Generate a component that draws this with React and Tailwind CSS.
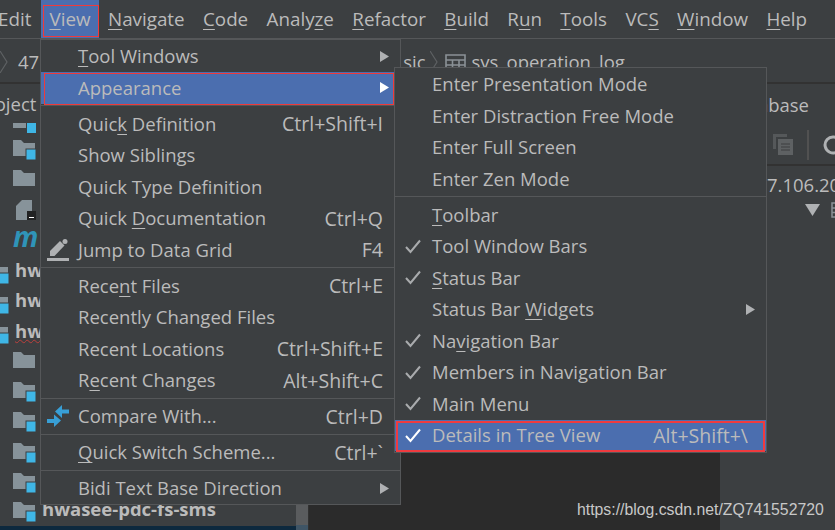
const FONT = "font-['Open_Sans','Noto_Sans',sans-serif]";

const topMenus = [
  ['Navigate', 'N'],
  ['Code', 'C'],
  ['Analyze', 'z'],
  ['Refactor', 'R'],
  ['Build', 'B'],
  ['Run', 'u'],
  ['Tools', 'T'],
  ['VCS', 'S'],
  ['Window', 'W'],
  ['Help', 'H'],
];

function Mnemonic({ text, mark }) {
  if (!mark) return <span>{text}</span>;
  const i = text.indexOf(mark);
  return (
    <span>
      {text.slice(0, i)}
      <span className="underline underline-offset-[3px] decoration-[1px]">{mark}</span>
      {text.slice(i + mark.length)}
    </span>
  );
}

function Arrow({ white }) {
  return (
    <svg width="9" height="11" viewBox="0 0 9 11" className="shrink-0">
      <path d="M0 0 L9 5.5 L0 11 Z" fill={white ? '#ffffff' : '#afb1b3'} />
    </svg>
  );
}

function Check({ white }) {
  return (
    <svg width="16" height="15" viewBox="0 0 16 15" fill="none" stroke={white ? '#ffffff' : '#a9abad'} strokeWidth="2">
      <path d="M1 8 L5.5 13 L15 1.5" />
    </svg>
  );
}

function Row({ label, mark, shortcut, arrow, icon, iconLeft = 'left-[6px]', active, pr = 'pr-[17px]' }) {
  return (
    <div className={`relative flex items-center justify-between h-[31.5px] pl-[37px] ${arrow ? 'pr-[11px]' : pr} ${active ? 'bg-[#4b6eaf]' : ''}`}>
      {icon && <div className={`absolute ${iconLeft} top-0 bottom-0 flex items-center`}>{icon}</div>}
      <Mnemonic text={label} mark={mark} />
      {shortcut && <span className="text-[19.5px]">{shortcut}</span>}
      {arrow && <Arrow white={active} />}
    </div>
  );
}

function Sep() {
  return <div className="h-[4.5px] flex items-center"><div className="h-px w-full bg-[#555759]" /></div>;
}

function Folder({ badge }) {
  return (
    <svg width="23" height="23" viewBox="0 0 23 23" className="shrink-0">
      <path d="M0 2 H8 L11 5 H22 V18 H0 Z" fill="#87939a" />
      {badge && <rect x="13" y="11" width="10" height="11" fill="#3fb6e6" stroke="#3c3f41" strokeWidth="1" />}
    </svg>
  );
}

function Module({ children, squiggle }) {
  return (
    <div className="flex items-center h-[30.3px] -ml-[14px] gap-[6px]">
      <div className="mt-[6px]"><Folder badge /></div>
      <span className={`font-bold ${squiggle ? 'underline decoration-wavy decoration-[#bc3f3c] decoration-[1px]' : ''}`}>{children}</span>
    </div>
  );
}

function TreeIcon({ children }) {
  return <div className="flex items-center h-[30.3px] pl-[13px]">{children}</div>;
}

export default function App() {
  return (
    <div className={`relative w-[835px] h-[530px] overflow-hidden bg-[#3c3f41] text-[#bbbbbb] text-[18.5px] leading-none ${FONT}`}>
      {/* main menu */}
      <div className="flex items-center h-[39px] border-b border-[#555759] text-[18.8px]">
        <span className="-ml-[2px] w-[42px]">Edit</span>
        <div className="relative flex items-center h-full w-[58px] justify-center bg-[#4b6eaf] shrink-0 -mx-[4px] ml-[1px]">
          <Mnemonic text="View" mark="V" />
          <div className="absolute left-[2px] right-0 top-[5px] bottom-[1px] border border-[#f03a3a]" />
        </div>
        <div className="flex gap-[18.4px] ml-[13px] whitespace-nowrap">
          {topMenus.map(([text, mark]) => (
            <Mnemonic key={text} text={text} mark={mark} />
          ))}
        </div>
      </div>

      {/* navigation bar */}
      <div className="flex items-center h-[45px] border-b-2 border-[#323232] pt-[3px]">
        <svg width="8" height="22" viewBox="0 0 8 22" fill="none" stroke="#5e6163" strokeWidth="1.2" className="shrink-0">
          <path d="M0 0 L7 11 L0 22" />
        </svg>
        <span className="ml-[10px]">47</span>
        <span className="ml-[364px]">sic</span>
        <svg width="8" height="22" viewBox="0 0 8 22" fill="none" stroke="#5e6163" strokeWidth="1.2" className="ml-[4px] shrink-0">
          <path d="M0 0 L7 11 L0 22" />
        </svg>
        <svg width="21" height="17" viewBox="0 0 21 17" className="ml-[7px] shrink-0" fill="none" stroke="#8a9196" strokeWidth="1.6">
          <path d="M1 1 H20 V16 H1 Z M1 6 H20 M1 11 H20 M7.5 6 V16 M14 6 V16" />
        </svg>
        <span className="ml-[6px]">sys_operation_log</span>
      </div>

      {/* tool windows and editor */}
      <div className="flex h-[446px]">
        <div className="w-[296px] shrink-0 flex flex-col overflow-hidden">
          <div className="flex-1">
            <div className="h-[29px] pt-[11px] -ml-[24px]">Project</div>
            <div className="flex h-[21px] items-end pl-[13px]">
              <div className="w-[13px] h-[5px] mb-[6px] bg-[#87939a]" />
              <div className="w-[9px] h-[10px] ml-px mb-px bg-[#3fb6e6]" />
            </div>
            <TreeIcon><Folder badge /></TreeIcon>
            <TreeIcon><Folder /></TreeIcon>
            <TreeIcon>
              <div className="relative">
                <svg width="16" height="20" viewBox="0 0 16 20" className="ml-[3px] block">
                  <path d="M6 0 H16 V20 H0 V6 Z" fill="#87939a" />
                </svg>
                <div className="absolute left-[14px] top-[11px] w-[9px] h-[9px] bg-[#222324] flex items-end justify-center pb-[2px]">
                  <div className="w-[5px] h-px bg-white" />
                </div>
              </div>
            </TreeIcon>
            <TreeIcon><span className="font-bold italic text-[#2f94b8] text-[28px] leading-none -mt-[8px]">m</span></TreeIcon>
            <Module>hwasee</Module>
            <Module>hwasee</Module>
            <Module squiggle>hwasee</Module>
            <TreeIcon><Folder /></TreeIcon>
            <TreeIcon><Folder badge /></TreeIcon>
            <TreeIcon><Folder badge /></TreeIcon>
            <TreeIcon><Folder badge /></TreeIcon>
            <TreeIcon><Folder badge /></TreeIcon>
            <div className="flex items-center h-[28px] pl-[13px] gap-[6px]">
              <Folder badge />
              <span className="font-bold -mt-[4px]">hwasee-pdc-fs-sms</span>
            </div>
          </div>
          <div className="h-[5px] bg-[#0d293e] shrink-0" />
        </div>
        <div className="w-[12px] bg-[#5a5c5e] shrink-0 flex flex-col justify-end">
          <div className="h-[5px] bg-[#3f5566]" />
        </div>
        <div className="w-px bg-[#323232] shrink-0" />
        <div className="flex-1 bg-[#2b2b2b]" />
        <div className="w-[115px] bg-[#3c3f41] shrink-0 relative overflow-hidden">
          <div className="h-[41px] pt-[12px] flex justify-end pr-[26px]">Database</div>
          <div className="h-[41px] border-b-2 border-[#323232] flex items-center pl-[53px]">
            <svg width="20" height="21" viewBox="0 0 20 21" className="shrink-0">
              <path d="M0 0 H14 V3 H3 V15 H0 Z" fill="#55585a" />
              <rect x="5" y="5" width="15" height="16" fill="#5e6163" />
              <path d="M8 10 H17 M8 13 H17 M8 16 H17" stroke="#3c3f41" strokeWidth="1.2" />
            </svg>
            <div className="w-[2px] h-[30px] bg-[#515151] ml-[14px] shrink-0" />
            <svg width="20" height="20" viewBox="0 0 20 20" fill="none" stroke="#afb1b3" strokeWidth="3" className="ml-[14px] shrink-0">
              <path d="M17 6 A8 8 0 1 0 18 11" />
              <path d="M19 1 V8 H12" fill="#afb1b3" stroke="none" />
            </svg>
          </div>
          <div className="h-[34px] pt-[10px] pl-[47px] whitespace-nowrap">7.106.20</div>
          <div className="flex items-center pl-[85px] gap-[11px] h-[20px]">
            <svg width="15" height="12" viewBox="0 0 15 12" className="shrink-0"><path d="M0 0 H15 L7.5 12 Z" fill="#afb1b3" /></svg>
            <svg width="12" height="16" viewBox="0 0 12 16" fill="none" stroke="#8a9196" strokeWidth="1.5" className="shrink-0">
              <path d="M1 1 H16 V15 H1 Z M1 6 H16 M1 10.500 H16" />
            </svg>
          </div>
        </div>
      </div>

      {/* view menu */}
      <div className="absolute left-[40px] top-[39px] w-[361px] h-[466px] bg-[#3c3f41] border border-[#555759] pt-[0.5px]">
        <Row label="Tool Windows" mark="T" arrow />
        <Row label="Appearance" arrow active />
        <div className="absolute left-[3px] right-[6px] top-[33px] h-[32px] border border-[#f03a3a]" />
        <Sep />
        <Row label="Quick Definition" mark="k" shortcut="Ctrl+Shift+I" />
        <Row label="Show Siblings" />
        <Row label="Quick Type Definition" />
        <Row label="Quick Documentation" mark="D" shortcut="Ctrl+Q" />
        <Row label="Jump to Data Grid" shortcut="F4" icon={
          <svg width="22" height="24" viewBox="0 0 22 24" fill="#afb1b3">
            <path d="M3 13 L13 3 L17.500 7.500 L7.500 18 H3 Z" />
            <circle cx="18" cy="3.500" r="2.500" />
            <rect x="0" y="20" width="22" height="3" />
          </svg>
        } />
        <Sep />
        <Row label="Recent Files" mark="n" shortcut="Ctrl+E" />
        <Row label="Recently Changed Files" />
        <Row label="Recent Locations" shortcut="Ctrl+Shift+E" />
        <Row label="Recent Changes" mark="e" shortcut="Alt+Shift+C" />
        <Sep />
        <Row label="Compare With..." shortcut="Ctrl+D" icon={
          <svg width="22" height="22" viewBox="0 0 22 22" fill="#389fd6">
            <path d="M8 6.500 L15 0 V4.500 H22 V8.500 H15 V13 Z" />
            <path d="M14 15.500 L7 9.500 V14 H0 V18 H7 V22 Z" />
          </svg>
        } />
        <Sep />
        <Row label="Quick Switch Scheme..." mark="Q" shortcut="Ctrl+`" />
        <Sep />
        <Row label="Bidi Text Base Direction" arrow />
      </div>

      {/* appearance submenu */}
      <div className="absolute left-[394px] top-[67px] w-[373px] h-[386px] bg-[#3c3f41] border border-[#555759] pt-[0.5px]">
        <Row label="Enter Presentation Mode" />
        <Row label="Enter Distraction Free Mode" />
        <Row label="Enter Full Screen" />
        <Row label="Enter Zen Mode" />
        <Sep />
        <Row label="Toolbar" mark="T" />
        <Row label="Tool Window Bars" icon={<Check />} iconLeft="left-[10px]" />
        <Row label="Status Bar" mark="S" icon={<Check />} iconLeft="left-[10px]" />
        <Row label="Status Bar Widgets" mark="W" arrow />
        <Row label="Navigation Bar" mark="v" icon={<Check />} iconLeft="left-[10px]" />
        <Row label="Members in Navigation Bar" icon={<Check />} iconLeft="left-[10px]" />
        <Row label="Main Menu" icon={<Check />} iconLeft="left-[10px]" />
        <Row label="Details in Tree View" shortcut="Alt+Shift+\" icon={<Check white />} iconLeft="left-[10px]" active pr="pr-[18px]" />
        <div className="absolute left-px right-px bottom-0 h-[31px] border-2 border-[#ef3b3f]" />
      </div>

      {/* watermark */}
      <div className="absolute left-[577px] top-[502px] text-[15.8px] font-['Liberation_Sans',sans-serif] text-[#c8c8c8]">
        https://blog.csdn.net/ZQ741552720
      </div>
    </div>
  );
}
